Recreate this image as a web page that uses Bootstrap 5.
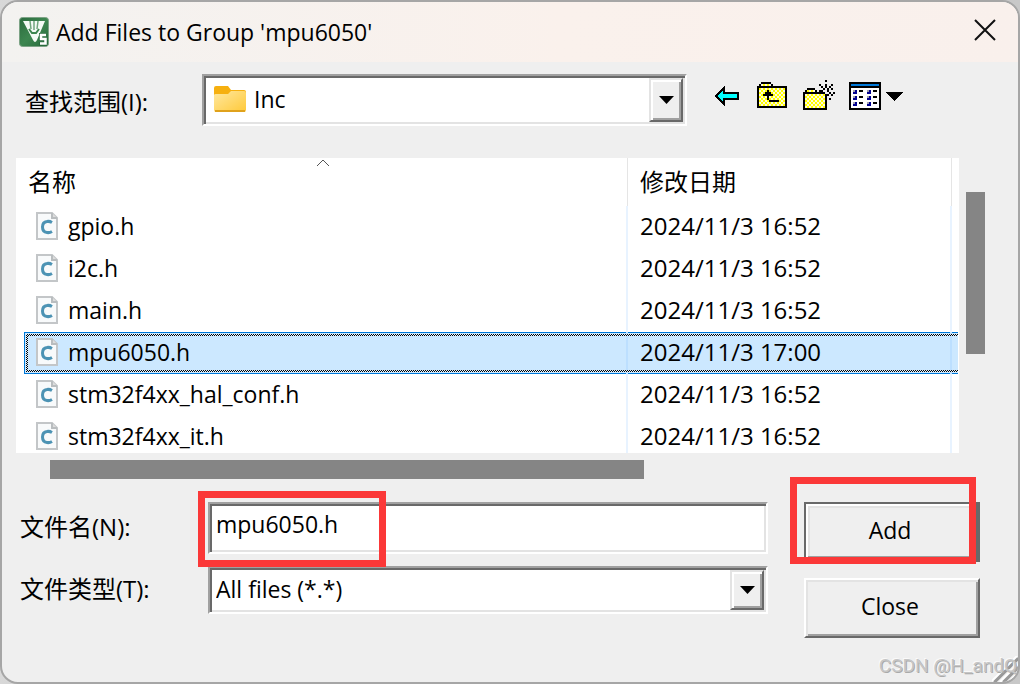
<!DOCTYPE html>
<html lang="zh-CN">
<head>
<meta charset="utf-8">
<meta name="viewport" content="width=device-width, initial-scale=1">
<title>Add Files to Group 'mpu6050'</title>
<link href="https://cdn.jsdelivr.net/npm/bootstrap@5.3.0/dist/css/bootstrap.min.css" rel="stylesheet">
<style>
  body { font-family: "Open Sans", "Noto Sans CJK SC", sans-serif; font-size: 23px; line-height: 32px; color: #000; background: linear-gradient(90deg, #d8d8d8, #b8b8b8 30%, #c8c8c8); }
  .dialog { min-height: 100vh; border: 2px solid #a6a6a6; border-radius: 18px; background: #efefef; overflow: hidden; }
  .titlebar { height: 60px; padding: 0 22px 0 17px; background: linear-gradient(90deg, #f3f2f0, #faf1ec 55%, #f9f0ec); }
  .title-text { margin-left: 7px; }
  .plain { border: 0; padding: 0; background: none; line-height: 0; }
  .close-x { padding-bottom: 4px; }
  .cn { font-size: 24px; }
  .lookin { padding: 12px 115px 0 23px; }
  .lookin label { width: 177px; padding-top: 3px; }
  .tools { margin-left: 28px; padding-top: 6px; }
  .sunken, .sunken:focus { width: 100%; color: #000; background: #fff; border: 2px solid; border-color: #a0a0a0 #fff #fff #a0a0a0; border-radius: 0; box-shadow: inset 2px 2px #696969, inset -2px -2px #e3e3e3; outline: 0; appearance: none; padding: 0 6px; }
  .tall { height: 52px; }
  .low { height: 48px; }
  input.sunken { padding-bottom: 9px; }
  select.sunken { padding-bottom: 2px; }
  select.with-icon { padding-left: 50px; }
  .folder { left: 12px; top: 11px; pointer-events: none; }
  .drop { right: 4px; top: 4px; bottom: 4px; width: 34px; background: #efefef; border: 2px solid; border-color: #e3e3e3 #696969 #696969 #e3e3e3; box-shadow: inset 2px 2px #fff, inset -2px -2px #a0a0a0; pointer-events: none; }
  .files { margin: 32px 33px 0 14px; gap: 7px; }
  .filelist { height: 295px; padding: 0 1px 0 8px; overflow: hidden; background: #fff; }
  .filelist table { width: 100%; table-layout: fixed; border-collapse: separate; border-spacing: 0; }
  .filelist th { height: 48px; padding: 0 0 0 4px; font-weight: 400; font-size: 24px; background: linear-gradient(#e5e5e5, #e5e5e5) right 0 top 0 / 1px 100% no-repeat; }
  .filelist td { height: 42px; padding: 0 2px 2px 12px; background: linear-gradient(#e8f3ff, #e8f3ff) right 0 top 0 / 2px 100% no-repeat; white-space: nowrap; }
  .filelist td:nth-child(2) { font-size: 24px; }
  .filelist th:nth-child(2) { padding-left: 12px; }
  .filelist .tail { background: none; padding: 0; }
  .filelist .picked { position: relative; background: #cce8ff; box-shadow: inset 0 1px #0078d7, inset 0 -1px #0078d7, inset 1px 0 #0078d7; }
  .filelist .picked td:not(.tail) { background-image: linear-gradient(#bcdfff, #bcdfff); }
  .picked .tail::after { content: ""; position: absolute; inset: 2px 0 2px 2px; padding: 2px 0 2px 2px; background: repeating-conic-gradient(#000 0 25%, #dff0ff 0 50%) 0 0 / 2px 2px; -webkit-mask: linear-gradient(#000 0 0) content-box, linear-gradient(#000 0 0); -webkit-mask-composite: xor; mask-composite: exclude; }
  .file-icon { margin-right: 8px; vertical-align: -5px; }
  .caret { left: calc(50% - 10px); top: 1px; }
  .vbar { width: 19px; height: 162px; margin-top: 34px; background: #858585; }
  .hscroll { margin: 7px 73px 0 48px; }
  .hbar { height: 19px; width: 594px; max-width: 100%; background: #858585; }
  .fields { padding: 23px 38px 44px 18px; gap: 36px; }
  .fields label { width: 188px; flex: none; padding-bottom: 3px; }
  .field-rows { gap: 12px; }
  .bevel { width: 176px; height: 60px; background: #efefef; border: 2px solid; border-color: #fff #696969 #696969 #fff; box-shadow: inset 2px 2px #e3e3e3, inset -2px -2px #a0a0a0; padding: 0 4px 4px 0; }
  .bevel.main { border-color: #696969; box-shadow: inset -2px -2px #696969, inset 2px 2px #fff, inset -4px -4px #a0a0a0, inset 4px 4px #e3e3e3; }
  .ring { border: 7px solid #fb3838; pointer-events: none; }
  .ring-name { left: -10px; top: -11px; width: 188px; height: 76px; z-index: 2; }
  .ring-add { left: -14px; top: -25px; width: 186px; height: 87px; }
  .grip { right: 0; bottom: 0; }
  .watermark { right: 1px; bottom: 2px; font: 19px/28px Roboto, sans-serif; color: #c6c6c6; text-shadow: 1px 1px #aaa, -1px -1px #fafafa; }
</style>
</head>
<body>
<main class="dialog position-relative">
  <header class="titlebar d-flex align-items-center">
    <svg width="30" height="30" viewBox="0 0 30 30" aria-hidden="true">
      <defs><linearGradient id="logo" x2="1" y2="1"><stop stop-color="#2b6b3e"/><stop offset=".5" stop-color="#3d8650"/><stop offset="1" stop-color="#286a3c"/></linearGradient></defs>
      <rect x=".5" y=".5" width="29" height="29" rx="3" fill="url(#logo)" stroke="#7da386"/>
      <path d="M4 4h22l-8 19q-2 4-4 0z" fill="#f4faf5"/>
      <path d="M11 4l1 8M15 4v9M19 4l-1 8" fill="none" stroke="#6fa57c" stroke-width="1.500"/>
      <path d="M10 12l3 4h4l3-4" fill="none" stroke="#3d8650" stroke-width="2"/>
      <path d="M27 18h-5v4h4v5h-6" fill="none" stroke="#286a3c" stroke-width="4"/>
      <path d="M27 18h-5v4h4.500v4.500H21" fill="none" stroke="#fff" stroke-width="2.500"/>
    </svg>
    <span class="title-text flex-grow-1">Add Files to Group 'mpu6050'</span>
    <button type="button" class="plain close-x" aria-label="Close window">
      <svg width="22" height="22" viewBox="0 0 22 22"><path d="M1 1l20 20M21 1L1 21" stroke="#111" stroke-width="2"/></svg>
    </button>
  </header>

  <div class="lookin d-flex align-items-center">
    <label for="lookin" class="cn">查找范围(I):</label>
    <div class="position-relative flex-grow-1">
      <select id="lookin" class="sunken tall with-icon d-block"><option>Inc</option></select>
      <svg class="folder position-absolute" width="32" height="28" viewBox="0 0 32 28" aria-hidden="true">
        <defs><linearGradient id="fold" x2="1" y2="1"><stop stop-color="#ffe8a0"/><stop offset="1" stop-color="#ffc938"/></linearGradient></defs>
        <path d="M0 3q0-2 2-2h12l3 4h13q2 0 2 2v6H0z" fill="#f6b010"/>
        <path d="M0 10q0-1 2-1h12l3-3h13q2 0 2 2v17q0 2-2 2H2q-2 0-2-2z" fill="url(#fold)"/>
        <path d="M1 26h30" stroke="#e0a21c" stroke-width="2"/>
      </svg>
      <span class="drop position-absolute d-flex align-items-center justify-content-center"><svg width="15" height="8"><path d="M0 0h15L7.500 8z"/></svg></span>
    </div>
    <div class="tools d-flex align-items-start align-self-start">
      <button type="button" class="plain" aria-label="Back">
        <svg width="42" height="30" viewBox="0 0 21 15"><path d="M.7 8l3.800-4v2.500h7v3h-7V12z" fill="#0ff" stroke="#000" shape-rendering="crispEdges"/></svg>
      </button>
      <button type="button" class="plain" aria-label="Up one level">
        <svg width="46" height="30" viewBox="0 0 23 15" shape-rendering="crispEdges">
          <defs><pattern id="dither" width="2" height="2" patternUnits="userSpaceOnUse"><path d="M0 0h2v2H0z" fill="#ff0"/><path d="M0 0h1v1H0zM1 1h1v1H1z" fill="#fffbd8"/></pattern></defs>
          <path d="M.5 13.500V3.500h1v-1h1v-1h4v1h1v1h7v10z" fill="url(#dither)"/>
          <path d="M2 1h5v1H2zM1 2h1v1H1zM7 2h1v1H7zM0 3h1v11H0zM1 3h14v1H1zM14 4h1v10h-1zM1 13h13v1H1zM5 5h1v1H5zM4 6h3v1H4zM3 7h5v1H3zM5 8h1v2H5zM6 10h5v1H6z"/>
        </svg>
      </button>
      <button type="button" class="plain" aria-label="New folder">
        <svg width="46" height="30" viewBox="0 0 23 15" shape-rendering="crispEdges">
          <path d="M1 6h1V5h4v1h5v8H1z" fill="url(#dither)"/>
          <path d="M2 4h4v1H2zM1 5h1v1H1zM6 5h1v1H6zM0 6h1v9H0zM1 6h10v1H1zM11 7h1v8h-1zM1 14h10v1H1zM11 0h1v1h-1zM11 2h1v2h-1zM8 2h1v1H8zM9 3h1v1H9zM10 4h1v1h-1zM8 5h2v1H8zM12 5h1v1h-1zM13 3h1v1h-1zM14 2h1v1h-1zM12 4h1v1h-1zM13 6h1v1h-1zM15 6h1v1h-1zM14 4h1v1h-1zM12 7h1v1h-1zM14 7h1v1h-1zM13 9h1v1h-1z"/>
        </svg>
      </button>
      <button type="button" class="plain" aria-label="View menu">
        <svg width="54" height="30" viewBox="0 0 27 15" shape-rendering="crispEdges">
          <path d="M0 1h16v14H0z"/><path d="M1 2h14v1H1z" fill="#0078d7"/><path d="M1 4h14v10H1z" fill="#fff"/>
          <path d="M2 5h1v1H2zM2 8h1v1H2zM2 11h1v1H2zM9 5h1v1H9zM9 8h1v1H9zM9 11h1v1H9z" fill="#a0a0b0"/>
          <path d="M3 5h1v2H2V6h1zM3 8h1v2H2V9h1zM3 11h1v2H2v-1h1zM10 5h1v2H9V6h1zM10 8h1v2H9V9h1zM10 11h1v2H9v-1h1z" fill="#000090"/>
          <path d="M5 5h2v1H5zM5 8h2v1H5zM5 11h2v1H5zM12 5h2v1h-2zM12 8h2v1h-2zM12 11h2v1h-2z"/>
          <path d="M18 6h9l-4.500 4.500z"/>
        </svg>
      </button>
    </div>
  </div>

  <svg width="0" height="0" class="position-absolute" aria-hidden="true">
    <symbol id="cfile" viewBox="0 0 22 28">
      <path d="M1 1h15l5 5v21H1z" fill="#f8fafb" stroke="#c3c6c8" stroke-width="2"/>
      <path d="M16 1v5h5" fill="#ddd" stroke="#b9bdbf" stroke-width="2"/>
      <path d="M16 10.500Q13.500 9 11 9.500 6.500 10 6.500 15t4.500 5.500q2.500.500 5-1" fill="none" stroke="#4c93b4" stroke-width="3"/>
    </symbol>
  </svg>

  <section class="files d-flex">
    <div class="filelist flex-fill">
      <table>
        <colgroup><col><col style="width:324px"><col style="width:6px"></colgroup>
        <thead><tr>
          <th class="position-relative">名称<svg class="caret position-absolute" width="14" height="8" viewBox="0 0 14 8"><path d="M1 7l6-6 6 6" fill="none" stroke="#555"/></svg></th>
          <th>修改日期</th><th class="tail"></th>
        </tr></thead>
        <tbody>
          <tr><td><svg class="file-icon" width="24" height="28"><use href="#cfile" width="22" height="28"/></svg>gpio.h</td><td>2024/11/3 16:52</td><td class="tail"></td></tr>
          <tr><td><svg class="file-icon" width="24" height="28"><use href="#cfile" width="22" height="28"/></svg>i2c.h</td><td>2024/11/3 16:52</td><td class="tail"></td></tr>
          <tr><td><svg class="file-icon" width="24" height="28"><use href="#cfile" width="22" height="28"/></svg>main.h</td><td>2024/11/3 16:52</td><td class="tail"></td></tr>
          <tr class="picked"><td><svg class="file-icon" width="24" height="28"><use href="#cfile" width="22" height="28"/></svg>mpu6050.h</td><td>2024/11/3 17:00</td><td class="tail"></td></tr>
          <tr><td><svg class="file-icon" width="24" height="28"><use href="#cfile" width="22" height="28"/></svg>stm32f4xx_hal_conf.h</td><td>2024/11/3 16:52</td><td class="tail"></td></tr>
          <tr><td><svg class="file-icon" width="24" height="28"><use href="#cfile" width="22" height="28"/></svg>stm32f4xx_it.h</td><td>2024/11/3 16:52</td><td class="tail"></td></tr>
        </tbody>
      </table>
    </div>
    <div class="vbar flex-shrink-0"></div>
  </section>
  <div class="hscroll"><div class="hbar"></div></div>

  <form class="fields d-flex align-items-start">
    <div class="field-rows d-flex flex-column flex-grow-1">
      <div class="d-flex align-items-center">
        <label for="fname" class="cn">文件名(N):</label>
        <div class="position-relative flex-grow-1">
          <input id="fname" type="text" class="sunken tall d-block" value="mpu6050.h">
          <span class="ring ring-name position-absolute"></span>
        </div>
      </div>
      <div class="d-flex align-items-center">
        <label for="ftype" class="cn">文件类型(T):</label>
        <div class="position-relative flex-grow-1">
          <select id="ftype" class="sunken low d-block"><option>All files (*.*)</option></select>
          <span class="drop position-absolute d-flex align-items-center justify-content-center"><svg width="15" height="8"><path d="M0 0h15L7.500 8z"/></svg></span>
        </div>
      </div>
    </div>
    <div class="d-grid gap-3 position-relative">
      <button type="button" class="bevel main">Add</button>
      <button type="button" class="bevel">Close</button>
      <span class="ring ring-add position-absolute"></span>
    </div>
  </form>

  <svg class="grip position-absolute" width="26" height="26" viewBox="0 0 26 26" aria-hidden="true"><path d="M2 26L26 2M11 26l15-15M20 26l6-6" stroke="#999" stroke-width="4"/><path d="M0 25L25 0M8 26L26 8M17 26l9-9" stroke="#fff" stroke-width="2"/></svg>
  <span class="watermark position-absolute">CSDN @H_andQ</span>
</main>
<script src="https://cdn.jsdelivr.net/npm/bootstrap@5.3.0/dist/js/bootstrap.bundle.min.js"></script>
</body>
</html>
